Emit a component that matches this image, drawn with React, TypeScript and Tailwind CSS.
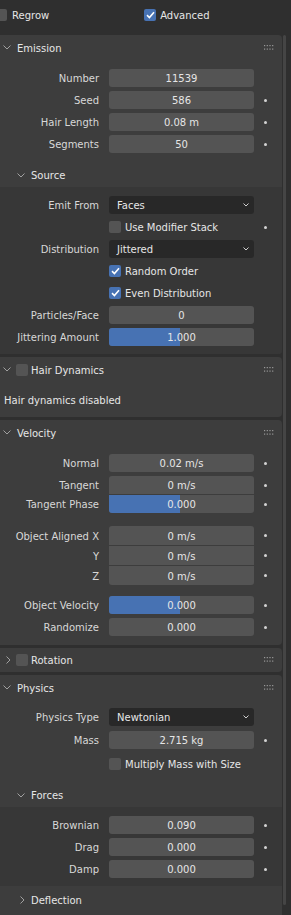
import React from 'react';

type Val = { label: string; dot?: boolean };

const T = 'relative top-[1px]';

function Chevron({ open = true, className = '' }: { open?: boolean; className?: string }) {
  return open ? (
    <svg width="8" height="5" viewBox="0 0 8 5" className={className}>
      <polyline points="0.5,0.5 4,4 7.5,0.5" fill="none" stroke="#a0a0a0" strokeWidth="1" />
    </svg>
  ) : (
    <svg width="5" height="8" viewBox="0 0 5 8" className={className}>
      <polyline points="0.5,0.5 4,4 0.5,7.5" fill="none" stroke="#a0a0a0" strokeWidth="1" />
    </svg>
  );
}

function Grip() {
  return (
    <svg width="11" height="6" viewBox="0 0 11 6" className="ml-auto mr-[7px]">
      {[0, 1].map((r) =>
        [0, 1, 2, 3].map((c) => (
          <rect key={`${r}-${c}`} x={c * 2.7} y={r * 3.5} width="1.2" height="1.2" fill="#9a9a9a" />
        ))
      )}
    </svg>
  );
}

function Check({ on = false }: { on?: boolean }) {
  return (
    <div
      className={
        'w-[12px] h-[12px] rounded-[2px] flex items-center justify-center shrink-0 ' +
        (on ? 'bg-[#4772b3]' : 'bg-[#545454]')
      }
    >
      {on && (
        <svg width="9" height="8" viewBox="0 0 9 8">
          <polyline points="1,4.2 3.4,6.5 8,1.2" fill="none" stroke="#ffffff" strokeWidth="1.6" />
        </svg>
      )}
    </div>
  );
}

function Dot({ show }: { show?: boolean }) {
  return (
    <div className="ml-[9px] w-[4px] flex items-center justify-center">
      {show && <div className="w-[3px] h-[3px] rounded-full bg-[#d4d4d4]" />}
    </div>
  );
}

function Row({ label, dot, children, h = 'h-[18px]' }: Val & { children: React.ReactNode; h?: string }) {
  return (
    <div className={'flex items-center ' + h}>
      <div className="w-[99px] text-right text-[#d8d8d8] whitespace-nowrap">
        <span className={T}>{label}</span>
      </div>
      <div className="ml-[10px] w-[145px] h-full">{children}</div>
      <Dot show={dot} />
    </div>
  );
}

function Num({ value, round = 'rounded-[3px]' }: { value: string; round?: string }) {
  return (
    <div className={'h-full bg-[#545454] flex items-center justify-center text-[#e6e6e6] ' + round}>
      <span className={T}>{value}</span>
    </div>
  );
}

function Slider({ value, pct, round = 'rounded-[3px]' }: { value: string; pct: number; round?: string }) {
  return (
    <div className={'relative h-full bg-[#545454] overflow-hidden flex items-center justify-center text-[#e6e6e6] ' + round}>
      <div className="absolute left-0 top-0 bottom-0 bg-[#4772b3]" style={{ width: `${pct}%` }} />
      <span className={T}>{value}</span>
    </div>
  );
}

function Drop({ value }: { value: string }) {
  return (
    <div className="h-full bg-[#282828] rounded-[3px] flex items-center pl-[8px] pr-[5px] text-[#e6e6e6]">
      <span className={T}>{value}</span>
      <svg width="6" height="4" viewBox="0 0 6 4" className="ml-auto">
        <polyline points="0.5,0.5 3,3 5.5,0.5" fill="none" stroke="#d0d0d0" strokeWidth="1" />
      </svg>
    </div>
  );
}

function CheckRow({ label, on, dot }: { label: string; on?: boolean; dot?: boolean }) {
  return (
    <div className="flex items-center h-[18px]">
      <div className="w-[109px]" />
      <div className="w-[145px] flex items-center gap-[4px] text-[#e6e6e6] whitespace-nowrap">
        <Check on={on} />
        <span className={T}>{label}</span>
      </div>
      <Dot show={dot} />
    </div>
  );
}

function Header({ title, open = true, check, h = 'h-[25px]' }: { title: string; open?: boolean; check?: boolean; h?: string }) {
  return (
    <div className={'flex items-center text-[#e6e6e6] ' + h}>
      <div className="w-[17px] flex justify-center">
        <Chevron open={open} className={open ? 'ml-[-3px]' : 'ml-[-1px]'} />
      </div>
      {check && (
        <div className="mr-[3px] ml-[-1px]">
          <Check />
        </div>
      )}
      <span className={T}>{title}</span>
      <Grip />
    </div>
  );
}

function SubHeader({ title, open = true, h = 'h-[24px]' }: { title: string; open?: boolean; h?: string }) {
  return (
    <div className={'flex items-center text-[#e6e6e6] ' + h}>
      <div className="w-[31px] flex justify-end pr-[6px]">
        <Chevron open={open} />
      </div>
      <span className={T}>{title}</span>
    </div>
  );
}

export default function App() {
  return (
    <div className="w-[291px] h-[915px] bg-[#2f2f2f] flex overflow-hidden font-['DejaVu_Sans',sans-serif] text-[10px] leading-none">
      <div className="w-[282px] flex flex-col">
        {/* top options */}
        <div className="h-[30px] flex items-center text-[#e6e6e6]">
          <div className="ml-[-5px]">
            <Check />
          </div>
          <span className={'ml-[5px] ' + T}>Regrow</span>
          <div className="ml-[95px]">
            <Check on />
          </div>
          <span className={'ml-[4px] ' + T}>Advanced</span>
        </div>

        {/* Emission */}
        <div className="mt-[5px] bg-[#3d3d3d] rounded-r-[4px]">
          <Header title="Emission" />
          <div className="pt-[9px] flex flex-col gap-[4px]">
            <Row label="Number"><Num value="11539" /></Row>
            <Row label="Seed" dot><Num value="586" /></Row>
            <Row label="Hair Length" dot><Num value="0.08 m" /></Row>
            <Row label="Segments" dot><Num value="50" /></Row>
          </div>
          <div className="mt-[10px]">
            <SubHeader title="Source" />
          </div>
          <div className="bg-[#373737] pt-[9px] pb-[8px] flex flex-col gap-[4px] rounded-br-[4px]">
            <Row label="Emit From"><Drop value="Faces" /></Row>
            <CheckRow label="Use Modifier Stack" dot />
            <Row label="Distribution"><Drop value="Jittered" /></Row>
            <CheckRow label="Random Order" on />
            <CheckRow label="Even Distribution" on />
            <Row label="Particles/Face"><Num value="0" /></Row>
            <Row label="Jittering Amount"><Slider value="1.000" pct={49} /></Row>
          </div>
        </div>

        {/* Hair Dynamics */}
        <div className="mt-[3px] bg-[#3d3d3d] rounded-r-[4px]">
          <Header title="Hair Dynamics" check />
          <div className="pt-[9px] pb-[8px]">
            <div className="h-[18px] flex items-center pl-[4px] text-[#e6e6e6]">
              <span className={T}>Hair dynamics disabled</span>
            </div>
          </div>
        </div>

        {/* Velocity */}
        <div className="mt-[3px] bg-[#3d3d3d] rounded-r-[4px] pb-[9px]">
          <Header title="Velocity" />
          <div className="pt-[9px] flex flex-col">
            <Row label="Normal" dot><Num value="0.02 m/s" /></Row>
            <div className="mt-[4px] flex flex-col gap-[1px]">
              <Row label="Tangent" dot><Num value="0 m/s" round="rounded-t-[3px]" /></Row>
              <Row label="Tangent Phase" dot><Slider value="0.000" pct={49} round="rounded-b-[3px]" /></Row>
            </div>
            <div className="mt-[13px] flex flex-col gap-[1px]">
              <Row label="Object Aligned X" dot h="h-[19px]"><Num value="0 m/s" round="rounded-t-[3px]" /></Row>
              <Row label="Y" dot h="h-[19px]"><Num value="0 m/s" round="" /></Row>
              <Row label="Z" dot h="h-[19px]"><Num value="0 m/s" round="rounded-b-[3px]" /></Row>
            </div>
            <div className="mt-[11px] flex flex-col gap-[4px]">
              <Row label="Object Velocity" dot><Slider value="0.000" pct={49} /></Row>
              <Row label="Randomize" dot><Num value="0.000" /></Row>
            </div>
          </div>
        </div>

        {/* Rotation */}
        <div className="mt-[3px] bg-[#3d3d3d] rounded-r-[4px]">
          <Header title="Rotation" open={false} check h="h-[24px]" />
        </div>

        {/* Physics */}
        <div className="mt-[3px] bg-[#3d3d3d] rounded-tr-[4px] flex-1">
          <Header title="Physics" />
          <div className="pt-[8px] flex flex-col">
            <Row label="Physics Type"><Drop value="Newtonian" /></Row>
            <div className="mt-[5px]">
              <Row label="Mass" dot><Num value="2.715 kg" /></Row>
            </div>
            <div className="mt-[6px]">
              <CheckRow label="Multiply Mass with Size" />
            </div>
          </div>
          <div className="mt-[10px]">
            <SubHeader title="Forces" />
          </div>
          <div className="bg-[#373737] pt-[9px] pb-[8px] flex flex-col gap-[4px]">
            <Row label="Brownian" dot><Num value="0.090" /></Row>
            <Row label="Drag" dot><Num value="0.000" /></Row>
            <Row label="Damp" dot><Num value="0.000" /></Row>
          </div>
          <SubHeader title="Deflection" open={false} h="h-[28px]" />
        </div>
      </div>

      {/* scrollbar strip */}
      <div className="flex-1 flex">
        <div className="ml-[1px] mt-[35px] w-[3px] h-[870px] rounded-full bg-[#454545]" />
      </div>
    </div>
  );
}
